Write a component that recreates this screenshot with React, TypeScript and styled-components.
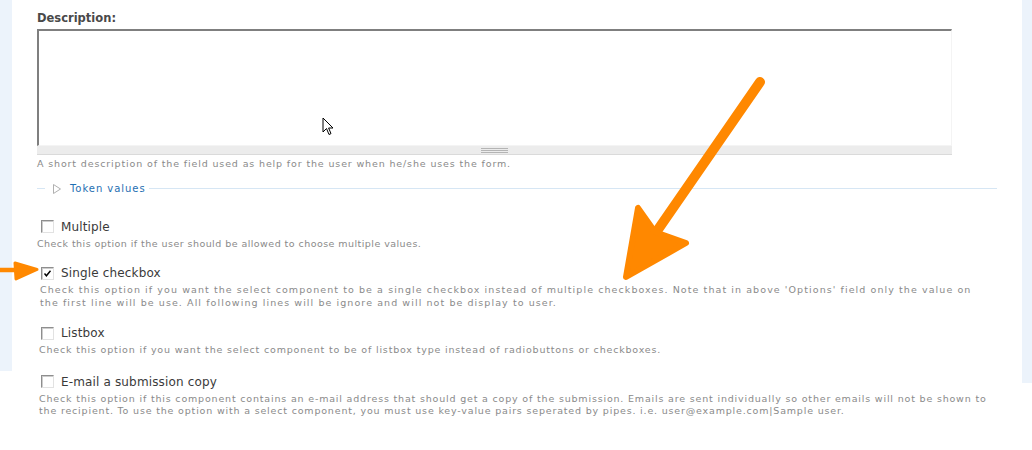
import React from "react";
import styled, { createGlobalStyle } from "styled-components";

const GlobalStyle = createGlobalStyle`
  html, body {
    margin: 0;
    padding: 0;
    background: #ffffff;
  }
  body {
    font-family: "DejaVu Sans", Verdana, sans-serif;
  }
`;

type OptionItem = {
  label: string;
  help: string;
  checked?: boolean;
  gap: number;
  spacing: number;
  indent: number;
};

const options: OptionItem[] = [
  {
    label: "Multiple",
    help: "Check this option if the user should be allowed to choose multiple values.",
    gap: 0,
    spacing: 0.45,
    indent: 0,
  },
  {
    label: "Single checkbox",
    help: "Check this option if you want the select component to be a single checkbox instead of multiple checkboxes. Note that in above 'Options' field only the value on the first line will be use. All following lines will be ignore and will not be display to user.",
    checked: true,
    gap: 15,
    spacing: 1.08,
    indent: 3,
  },
  {
    label: "Listbox",
    help: "Check this option if you want the select component to be of listbox type instead of radiobuttons or checkboxes.",
    gap: 16,
    spacing: 0.82,
    indent: 2,
  },
  {
    label: "E-mail a submission copy",
    help: "Check this option if this component contains an e-mail address that should get a copy of the submission. Emails are sent individually so other emails will not be shown to the recipient. To use the option with a select component, you must use key-value pairs seperated by pipes. i.e. user@example.com|Sample user.",
    gap: 17,
    spacing: 0.82,
    indent: 2,
  },
];

export default function App() {
  return (
    <>
      <GlobalStyle />
      <Page>
        <Rail $height={371} />
        <Main>
          <FieldLabel>Description:</FieldLabel>
          <TextareaWrap>
            <TextBox />
            <Grip>
              <GripLines />
            </Grip>
            <Cursor viewBox="0 0 12 19">
              <path
                d="M1 1 L1 15 L4.5 11.5 L7 17.5 L9 16.6 L6.6 11 L11 11 Z"
                fill="#ffffff"
                stroke="#000000"
                strokeWidth="1"
              />
            </Cursor>
          </TextareaWrap>
          <Help $spacing={0.86}>
            A short description of the field used as help for the user when
            he/she uses the form.
          </Help>
          <Fieldset>
            <LegendLine $width={8} />
            <Triangle viewBox="0 0 10 12">
              <path d="M1.5 1.5 L8.5 6 L1.5 10.5 Z" fill="none" stroke="#b0b0b0" strokeWidth="1" />
            </Triangle>
            <TokenLink>Token values</TokenLink>
            <LegendLine />
          </Fieldset>
          <Options>
            {options.map((o) => (
              <Option key={o.label} $gap={o.gap}>
                <OptionRow>
                  <Box>
                    {o.checked && (
                      <svg width="9" height="9" viewBox="0 0 9 9">
                        <path d="M1.5 4.5 L3.4 6.8 L7.5 1.8" fill="none" stroke="#000" strokeWidth="1.4" />
                      </svg>
                    )}
                  </Box>
                  <OptionLabel>{o.label}</OptionLabel>
                </OptionRow>
                <Help $spacing={o.spacing} $indent={o.indent}>
                  {o.help}
                </Help>
              </Option>
            ))}
          </Options>
        </Main>
        <Rail $height={383} $width={10} />
        <Arrows viewBox="0 0 1032 450">
          <g fill="#ff8800" stroke="#ff8800" strokeLinejoin="round" strokeLinecap="round">
            <line x1="760" y1="82" x2="648" y2="244" strokeWidth="10" />
            <polygon points="638,208 626,277 686,243 655,232" strokeWidth="6" />
            <line x1="0" y1="270" x2="20" y2="270" strokeWidth="4.5" />
            <polygon points="15,263 37,269.5 16,279" strokeWidth="3" />
          </g>
        </Arrows>
      </Page>
    </>
  );
}

//styles
const Page = styled.div`
  position: relative;
  display: flex;
  align-items: flex-start;
  width: 1032px;
  height: 450px;
  overflow: hidden;
`;

const Rail = styled.div<{ $height: number; $width?: number }>`
  flex: none;
  width: ${(p) => p.$width ?? 12}px;
  height: ${(p) => p.$height}px;
  background: #ecf3fb;
`;

const Main = styled.div`
  flex: 1;
  padding: 10px 25px 0 25px;
`;

const FieldLabel = styled.div`
  font-weight: bold;
  font-size: 11.5px;
  line-height: 16px;
  color: #494949;
  margin-bottom: 3px;
`;

const TextareaWrap = styled.div`
  position: relative;
  width: 915px;
`;

const TextBox = styled.div`
  box-sizing: border-box;
  height: 117px;
  border-top: 2px solid #7f7f7f;
  border-left: 2px solid #7f7f7f;
  border-right: 1px solid #f4f4f4;
  border-bottom: 1px solid #f4f4f4;
  background: #ffffff;
`;

const Grip = styled.div`
  box-sizing: border-box;
  height: 9px;
  background: #ececec;
  border-bottom: 1px solid #dadada;
  display: flex;
  align-items: center;
  justify-content: center;
`;

const GripLines = styled.div`
  width: 27px;
  height: 5px;
  border-top: 1px solid #b4b4b4;
  border-bottom: 1px solid #b4b4b4;
  box-sizing: border-box;
  position: relative;
  &::after {
    content: "";
    position: absolute;
    left: 0;
    right: 0;
    top: 1px;
    border-top: 1px solid #b4b4b4;
  }
`;

const Cursor = styled.svg`
  position: absolute;
  left: 285px;
  top: 88px;
  width: 12px;
  height: 19px;
`;

const Help = styled.div<{ $spacing: number; $indent?: number }>`
  font-size: 9.5px;
  line-height: 12.5px;
  letter-spacing: ${(p) => p.$spacing}px;
  color: #8a8a8a;
  margin-top: 3px;
  padding-left: ${(p) => p.$indent ?? 0}px;
`;

const Fieldset = styled.div`
  display: flex;
  align-items: center;
  margin-top: 11px;
  height: 14px;
`;

const LegendLine = styled.div<{ $width?: number }>`
  height: 1px;
  background: #d6e6f4;
  ${(p) => (p.$width ? `width: ${p.$width}px; flex: none;` : "flex: 1; margin-left: 3px;")}
`;

const Triangle = styled.svg`
  width: 10px;
  height: 12px;
  margin-left: 7px;
  margin-right: 8px;
`;

const TokenLink = styled.span`
  font-size: 10px;
  letter-spacing: 0.95px;
  color: #1f6fb2;
`;

const Options = styled.div`
  margin-top: 23px;
  width: 953px;
`;

const Option = styled.div<{ $gap: number }>`
  margin-top: ${(p) => p.$gap}px;
`;

const OptionRow = styled.div`
  display: flex;
  align-items: center;
  height: 16px;
`;

const Box = styled.span`
  box-sizing: border-box;
  width: 13px;
  height: 13px;
  margin-left: 4px;
  margin-right: 7px;
  border-top: 1px solid #8e8e8e;
  border-left: 1px solid #8e8e8e;
  border-right: 1px solid #e2e2e2;
  border-bottom: 1px solid #e2e2e2;
  box-shadow: inset 1px 1px 0 #cdcdcd;
  background: #ffffff;
  display: flex;
  align-items: center;
  justify-content: center;
`;

const OptionLabel = styled.span`
  font-size: 12px;
  letter-spacing: 0.15px;
  color: #3a3a3a;
`;

const Arrows = styled.svg`
  position: absolute;
  left: 0;
  top: 0;
  width: 1032px;
  height: 450px;
  pointer-events: none;
`;
